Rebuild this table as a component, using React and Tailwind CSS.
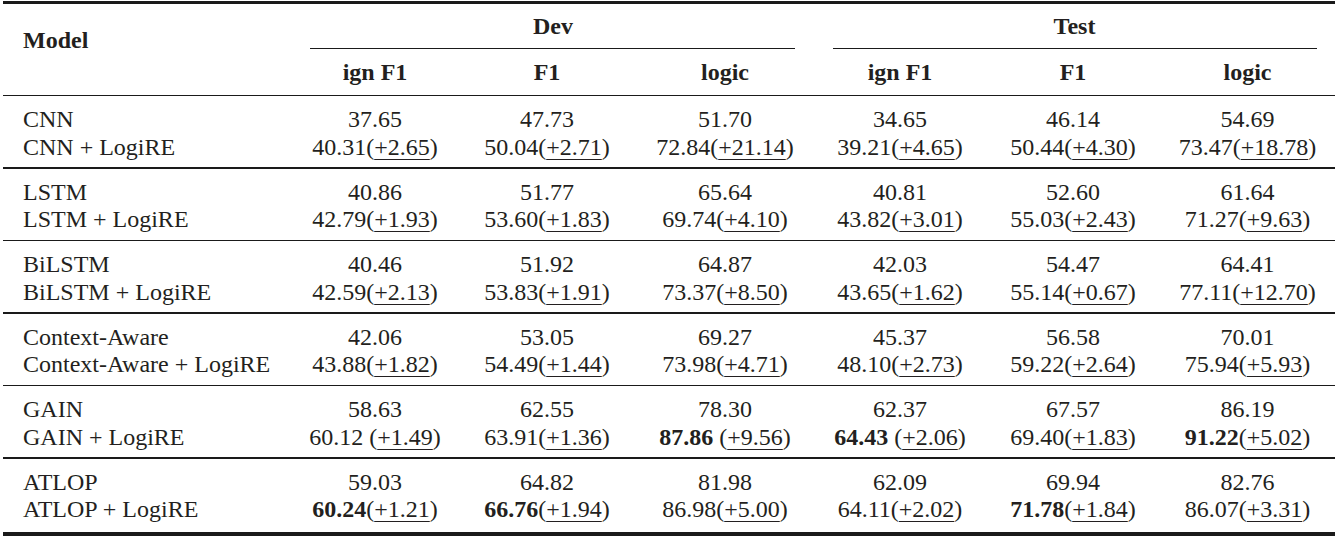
import React from "react";

const COLS = "grid grid-cols-[289px_166px_178px_178px_172px_174px_175px]";

const c = (v, d, b = false, sp = false) => ({ v, d, b, sp });

const groups = [
  [
    ["CNN", "37.65", "47.73", "51.70", "34.65", "46.14", "54.69"],
    ["CNN + LogiRE", c("40.31", "+2.65"), c("50.04", "+2.71"), c("72.84", "+21.14"), c("39.21", "+4.65"), c("50.44", "+4.30"), c("73.47", "+18.78")],
  ],
  [
    ["LSTM", "40.86", "51.77", "65.64", "40.81", "52.60", "61.64"],
    ["LSTM + LogiRE", c("42.79", "+1.93"), c("53.60", "+1.83"), c("69.74", "+4.10"), c("43.82", "+3.01"), c("55.03", "+2.43"), c("71.27", "+9.63")],
  ],
  [
    ["BiLSTM", "40.46", "51.92", "64.87", "42.03", "54.47", "64.41"],
    ["BiLSTM + LogiRE", c("42.59", "+2.13"), c("53.83", "+1.91"), c("73.37", "+8.50"), c("43.65", "+1.62"), c("55.14", "+0.67"), c("77.11", "+12.70")],
  ],
  [
    ["Context-Aware", "42.06", "53.05", "69.27", "45.37", "56.58", "70.01"],
    ["Context-Aware + LogiRE", c("43.88", "+1.82"), c("54.49", "+1.44"), c("73.98", "+4.71"), c("48.10", "+2.73"), c("59.22", "+2.64"), c("75.94", "+5.93")],
  ],
  [
    ["GAIN", "58.63", "62.55", "78.30", "62.37", "67.57", "86.19"],
    ["GAIN + LogiRE", c("60.12", "+1.49", false, true), c("63.91", "+1.36"), c("87.86", "+9.56", true, true), c("64.43", "+2.06", true, true), c("69.40", "+1.83"), c("91.22", "+5.02", true)],
  ],
  [
    ["ATLOP", "59.03", "64.82", "81.98", "62.09", "69.94", "82.76"],
    ["ATLOP + LogiRE", c("60.24", "+1.21", true), c("66.76", "+1.94", true), c("86.98", "+5.00"), c("64.11", "+2.02"), c("71.78", "+1.84", true), c("86.07", "+3.31")],
  ],
];

function Cell({ x }) {
  if (typeof x === "string") return <span>{x}</span>;
  return (
    <span className="whitespace-pre">
      {x.b ? <span className="font-bold">{x.v}</span> : x.v}
      {x.sp ? " " : ""}(
      <span className="underline decoration-1 underline-offset-[4px]">{x.d}</span>)
    </span>
  );
}

function Line({ row }) {
  return (
    <div className={`${COLS} leading-[27.5px] h-[27.5px]`}>
      <div className="pl-[20px] whitespace-nowrap">{row[0]}</div>
      {row.slice(1).map((x, i) => (
        <div key={i} className="text-center whitespace-nowrap">
          <Cell x={x} />
        </div>
      ))}
    </div>
  );
}

export default function App() {
  return (
    <div
      className="w-[1339px] h-[551px] bg-white text-[#231f20] text-[24px] overflow-hidden"
      style={{ fontFamily: '"Liberation Serif", "Times New Roman", serif' }}
    >
      <div className="ml-[3px] w-[1332px] pt-[1px]">
        <div className="h-[3px] bg-[#1a1a1a]" />
        {/* header */}
        <div className={`${COLS} h-[90.5px] font-bold`}>
          <div className="pl-[20px] pt-[23px] leading-[27.5px]">Model</div>
          <div className="col-span-3 flex flex-col">
            <div className="h-[43.5px] pt-[9px] leading-[27.5px] text-center">Dev</div>
            <div className="mx-[18px] mr-[19px] h-[1.5px] bg-[#1a1a1a]" />
            <div className="grid grid-cols-[166px_178px_178px] pt-[9.5px] leading-[27.5px]">
              <div className="text-center">ign F1</div>
              <div className="text-center">F1</div>
              <div className="text-center">logic</div>
            </div>
          </div>
          <div className="col-span-3 flex flex-col">
            <div className="h-[43.5px] pt-[9px] leading-[27.5px] text-center">Test</div>
            <div className="ml-[19px] mr-[18px] h-[1.5px] bg-[#1a1a1a]" />
            <div className="grid grid-cols-[172px_174px_175px] pt-[9.5px] leading-[27.5px]">
              <div className="text-center">ign F1</div>
              <div className="text-center">F1</div>
              <div className="text-center">logic</div>
            </div>
          </div>
        </div>
        <div className="h-[1.5px] bg-[#1a1a1a]" />
        {groups.map((g, gi) => {
          const last = gi === groups.length - 1;
          return (
            <div key={gi}>
              <div className={last ? "pt-[10px] pb-[8.5px]" : "pt-[10px] pb-[6px]"}>
                {g.map((row, ri) => (
                  <Line key={ri} row={row} />
                ))}
              </div>
              <div className={last ? "h-[3.5px] bg-[#1a1a1a]" : "h-[1.5px] bg-[#1a1a1a]"} />
            </div>
          );
        })}
      </div>
    </div>
  );
}
